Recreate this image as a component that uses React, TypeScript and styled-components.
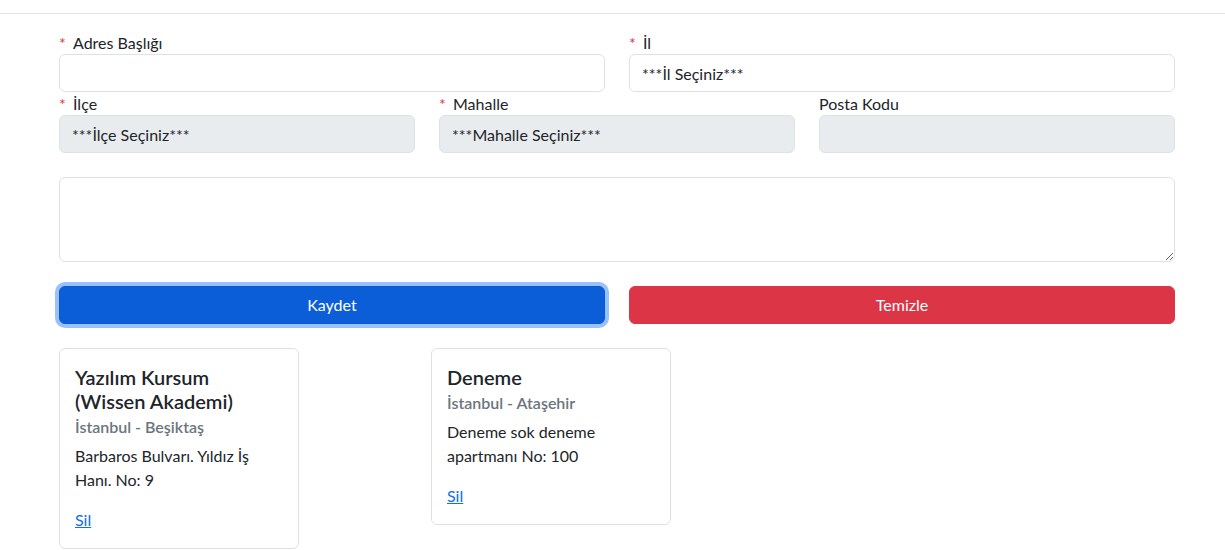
import styled, { createGlobalStyle } from "styled-components";

const GlobalStyle = createGlobalStyle`
  * { box-sizing: border-box; }
  body {
    margin: 0;
    background: #fff;
    color: #212529;
    font-family: Lato, "Noto Sans", "Liberation Sans", sans-serif;
    font-size: 16px;
    line-height: 1.5;
  }
`;

interface CardData {
  title: string;
  place: string;
  address: string;
}

const addresses: CardData[] = [
  {
    title: "Yazılım Kursum (Wissen Akademi)",
    place: "İstanbul - Beşiktaş",
    address: "Barbaros Bulvarı. Yıldız İş Hanı. No: 9",
  },
  {
    title: "Deneme",
    place: "İstanbul - Ataşehir",
    address: "Deneme sok deneme apartmanı No: 100",
  },
];

function Field({ label, required, value, disabled }: { label: string; required?: boolean; value?: string; disabled?: boolean }) {
  return (
    <FieldBox>
      <Label>
        {required && <Star>*</Star>}
        {label}
      </Label>
      <Input readOnly value={value ?? ""} $disabled={disabled} />
    </FieldBox>
  );
}

export default function App() {
  return (
    <>
      <GlobalStyle />
      <TopBar />
      <Page>
        <Form>
          <Row $cols={2}>
            <Field label="Adres Başlığı" required />
            <Field label="İl" required value="***İl Seçiniz***" />
          </Row>
          <Row $cols={3}>
            <Field label="İlçe" required value="***İlçe Seçiniz***" disabled />
            <Field label="Mahalle" required value="***Mahalle Seçiniz***" disabled />
            <Field label="Posta Kodu" disabled />
          </Row>
          <TextArea />
          <Row $cols={2}>
            <Button $variant="primary">Kaydet</Button>
            <Button $variant="danger">Temizle</Button>
          </Row>
        </Form>
        <CardGrid>
          {addresses.map((a) => (
            <Card key={a.title}>
              <CardTitle>{a.title}</CardTitle>
              <CardSubtitle>{a.place}</CardSubtitle>
              <CardText>{a.address}</CardText>
              <CardLink href="#">Sil</CardLink>
            </Card>
          ))}
        </CardGrid>
      </Page>
    </>
  );
}

const TopBar = styled.div`
  height: 14px;
  border-bottom: 1px solid #e4e6e8;
`;

const Page = styled.main`
  padding: 17px 50px 0 59px;
`;

const Form = styled.div`
  display: flex;
  flex-direction: column;
`;

const Row = styled.div<{ $cols: number }>`
  display: grid;
  grid-template-columns: repeat(${(p) => p.$cols}, 1fr);
  column-gap: 24px;
`;

const FieldBox = styled.div`
  display: flex;
  flex-direction: column;
`;

const Label = styled.label`
  display: block;
  line-height: 23px;
  height: 23px;
  white-space: pre;
`;

const Star = styled.span`
  display: inline-block;
  width: 14px;
  color: #dc3545;
`;

const Input = styled.input<{ $disabled?: boolean }>`
  display: block;
  width: 100%;
  height: 38px;
  padding: 6px 12px;
  font: inherit;
  color: #212529;
  background: ${(p) => (p.$disabled ? "#e9ecef" : "#fff")};
  border: 1px solid #dee2e6;
  border-radius: 6px;
  outline: none;
`;

const TextArea = styled.textarea`
  display: block;
  width: 100%;
  height: 85px;
  margin: 24px 0 24px;
  padding: 6px 12px;
  font: inherit;
  border: 1px solid #dee2e6;
  border-radius: 6px;
  outline: none;
  resize: vertical;
`;

const Button = styled.button<{ $variant: "primary" | "danger" }>`
  height: 38px;
  font: inherit;
  color: #fff;
  border: 1px solid ${(p) => (p.$variant === "primary" ? "#0a58ca" : "#dc3545")};
  border-radius: 6px;
  background: ${(p) => (p.$variant === "primary" ? "#0b5ed7" : "#dc3545")};
  box-shadow: ${(p) => (p.$variant === "primary" ? "0 0 0 4px rgba(49, 132, 253, 0.5)" : "none")};
  cursor: pointer;
`;

const CardGrid = styled.div`
  display: grid;
  grid-template-columns: repeat(3, 372px);
  align-items: start;
  margin-top: 24px;
`;

const Card = styled.div`
  width: 240px;
  padding: 16px 16px 16px 15px;
  border: 1px solid rgba(0, 0, 0, 0.12);
  border-radius: 6px;
`;

const CardTitle = styled.h5`
  margin: 0 0 8px;
  font-size: 20px;
  font-weight: 600;
  line-height: 1.2;
`;

const CardSubtitle = styled.h6`
  margin: -4px 0 8px;
  font-size: 16px;
  font-weight: 600;
  line-height: 1.2;
  color: #6c757d;
`;

const CardText = styled.p`
  margin: 0 0 16px;
`;

const CardLink = styled.a`
  color: #0d6efd;
  text-decoration: underline;
`;
